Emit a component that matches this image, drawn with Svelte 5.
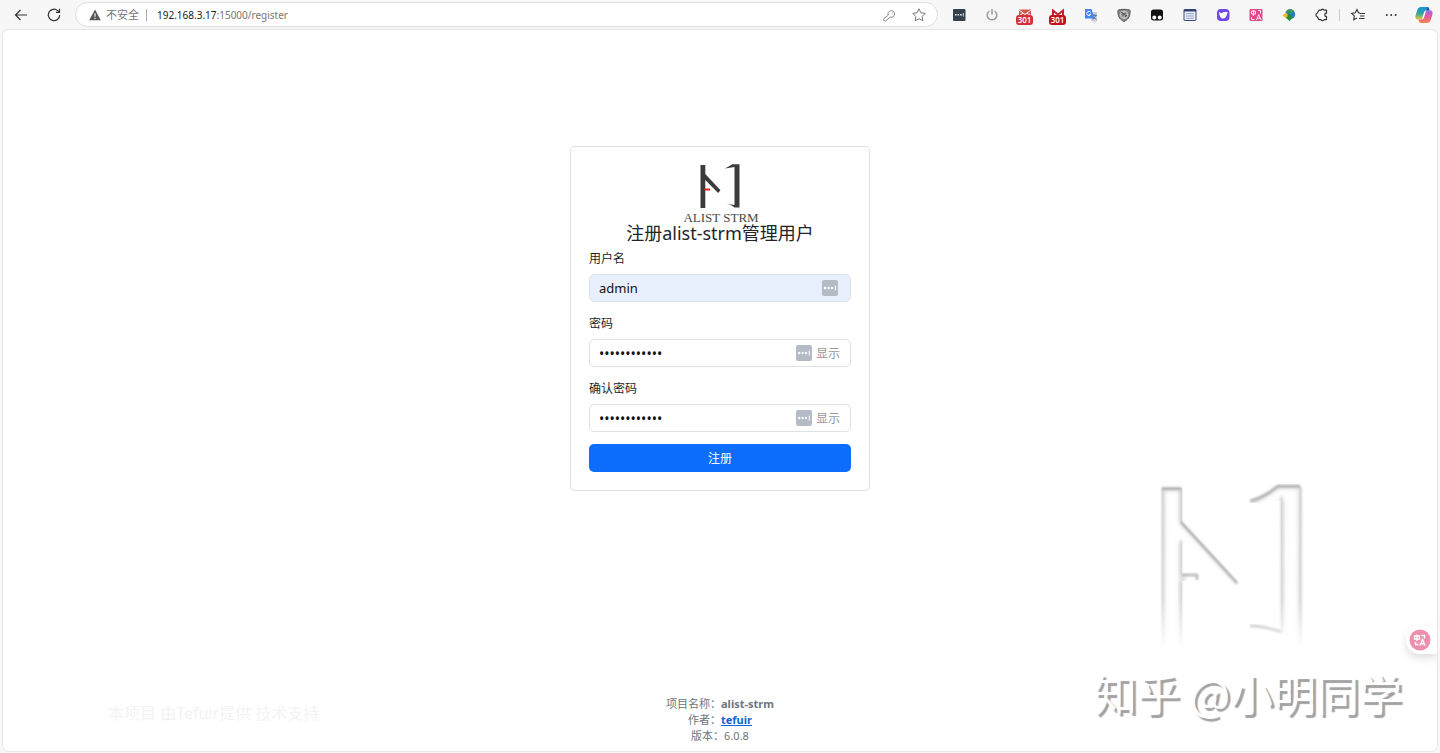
<script>
	let username = $state('admin');
	let password = $state('alist-strm12');
	let confirm = $state('alist-strm12');
	let showPassword = $state(false);
	let showConfirm = $state(false);
	let address = $state('192.168.3.17:15000/register');

	const host = $derived(address.split(':')[0]);
	const rest = $derived(address.slice(host.length));

	const extensions = [
		{ id: 'vault', label: 'Password vault' },
		{ id: 'power', label: 'Power' },
		{ id: 'mail', label: 'Mail', count: 301 },
		{ id: 'gmail', label: 'Gmail', count: 301 },
		{ id: 'translate', label: 'Translate' },
		{ id: 'shield', label: 'Privacy' },
		{ id: 'monkey', label: 'Scripts' },
		{ id: 'notes', label: 'Notes' },
		{ id: 'bird', label: 'Assistant' },
		{ id: 'immersive', label: 'Immersive translate' },
		{ id: 'download', label: 'Download manager' },
		{ id: 'puzzle', label: 'Extensions' },
	];

	function submit(e) {
		e.preventDefault();
	}
</script>

{#snippet dots()}
	<svg class="fill-icon" viewBox="0 0 16 16" aria-hidden="true">
		<rect width="16" height="16" rx="2" fill="#b4bac6" />
		<circle cx="3.2" cy="8" r="1.2" fill="#fff" />
		<circle cx="6.6" cy="8" r="1.2" fill="#fff" />
		<circle cx="10" cy="8" r="1.2" fill="#fff" />
		<path d="M13.3 5.5v5" stroke="#fff" />
	</svg>
{/snippet}

{#snippet translateGlyph()}
	<path d="M2.5 4h5v3h-5zM5 2.5v6.5M9.5 3.5h3v3M3.5 10v2.5h3" fill="none" stroke="#fff" stroke-width="1.3" />
	<path d="M8 13.5l2.5-6 2.5 6M9 11.7h3" fill="none" stroke="#fff" stroke-width="1.4" />
{/snippet}

<div class="browser">
	<header class="toolbar">
		<button class="tool" type="button" aria-label="Back">
			<svg viewBox="0 0 16 16"><path d="M14 8H2.5M7.5 3L2.5 8l5 5" fill="none" stroke="#333" stroke-width="1.2" /></svg>
		</button>
		<button class="tool" type="button" aria-label="Reload">
			<svg viewBox="0 0 16 16">
				<path d="M13.7 8a5.7 5.7 0 1 1-2-4.4L13.2 5" fill="none" stroke="#333" stroke-width="1.2" />
				<path d="M13.5 1.8V5.3H10" fill="none" stroke="#333" stroke-width="1.2" />
			</svg>
		</button>
		<div class="address">
			<svg class="warn" viewBox="0 0 12 12"><path d="M6 .6L11.8 11.2H.2z" fill="#555" /><path d="M6 4.2v3.5M6 8.7v1.3" stroke="#fff" stroke-width="1.1" /></svg>
			<span class="insecure">不安全</span>
			<span class="url"><b>{host}</b>{rest}</span>
			<button class="mini" type="button" aria-label="Saved passwords">
				<svg viewBox="0 0 16 16"><path d="M7.2 8.200a3.300 3.300 0 1 1 2 1.900L4.500 14 2.600 13.600l.2-1.900z" fill="none" stroke="#888" stroke-linejoin="round" /><circle cx="11.300" cy="6" r=".6" fill="#888" /></svg>
			</button>
			<button class="mini" type="button" aria-label="Add to favourites">
				<svg viewBox="0 0 16 16"><path d="M8 1.8l1.9 4 4.4.6-3.2 3 .8 4.4L8 11.7l-3.9 2.1.8-4.4-3.2-3 4.4-.6z" fill="none" stroke="#777" stroke-linejoin="round" /></svg>
			</button>
		</div>

		{#each extensions as ext (ext.id)}
			<button class="tool" type="button" aria-label={ext.label}>
				<svg viewBox="0 0 16 16">
					{#if ext.id === 'vault'}
						<rect x="2" y="2" width="12.5" height="12" rx="1" fill="#33414f" />
						<path d="M4 7.8h1.5M6.6 7.8h1.5M9.2 7.8h1.5" stroke="#fff" stroke-width="1.6" />
						<path d="M12.3 6v3.6" stroke="#fff" stroke-width=".8" />
					{:else if ext.id === 'power'}
						<path d="M5.3 4a4.8 4.8 0 1 0 5.4 0M8 2v5.5" fill="none" stroke="#999" stroke-width="1.5" />
					{:else if ext.id === 'mail'}
						<path d="M2 2.5h12V14H2z" fill="#d9534f" />
						<path d="M2 3l6 4.5L14 3M2 9l4-3M14 9l-4-3" fill="none" stroke="#fff" />
					{:else if ext.id === 'gmail'}
						<path d="M2 3h12v11H2z" fill="#fff" />
						<path d="M3 13V3.5l5 4 5-4V13" fill="none" stroke="#c9202c" stroke-width="2" />
					{:else if ext.id === 'translate'}
						<path d="M7 5h7v9.5H8.5z" fill="#c9cdd4" />
						<path d="M2 2h6.5l3 9.5H2z" fill="#4285f4" />
						<path d="M7.6 5.3a2.1 2.1 0 1 0 .2 2H5.9" fill="none" stroke="#fff" />
						<path d="M9.8 8.3h4M11.8 7.3v1M13 8.5l-3 4M10.8 10l2.5 2.5" fill="none" stroke="#4c6d99" stroke-width=".9" />
					{:else if ext.id === 'shield'}
						<path d="M2 3.2C5 2 11 2 14 3.2c.5 5-1 9-6 11.3C3 12.2 1.500 8.200 2 3.200z" fill="#888" stroke="#555" />
						<circle cx="8" cy="7.8" r="3.8" fill="#aaa" stroke="#ddd" stroke-width=".7" />
						<path d="M5.5 7.5L7 6.500l3.500 2.500M6 9.500l4-4M5 5.500l2 .5M9 10l2-2" stroke="#444" stroke-width=".9" fill="none" />
					{:else if ext.id === 'monkey'}
						<rect x="2" y="2.5" width="12" height="11" rx="2.5" fill="#111" />
						<circle cx="5.3" cy="10.5" r="2" fill="#fff" /><circle cx="10.7" cy="10.5" r="2" fill="#fff" />
					{:else if ext.id === 'notes'}
						<rect x="2" y="2.5" width="12" height="11" rx=".5" fill="#eef" stroke="#394779" />
						<path d="M2 3.5h12" stroke="#34406f" stroke-width="2" />
						<path d="M4 6.7h8M4 9h8M4 11.3h8" stroke="#8fa2c5" />
					{:else if ext.id === 'bird'}
						<rect x="2" y="2" width="12.5" height="12" rx="4" fill="#7047eb" />
						<path d="M4 5l3 1.5c.4-1 1-1.500 2-1.500h4c-1 1-.8 1.800-1.200 3-.8 2.500-2 3.500-4 3.500-2.200 0-3.400-2.500-3.800-6.500z" fill="#fff" />
					{:else if ext.id === 'immersive'}
						<rect x="1.5" y="2" width="13" height="12" rx="1" fill="#e5478c" />
						<path d="M3.5 4.2h4v2.8h-4zM5.5 3v6M10 3.5h2.5v3M3.5 10v2.5h3M8.500 13l2.200-5.500L13 13M9.300 11.200h3" fill="none" stroke="#fff" stroke-width=".9" />
					{:else if ext.id === 'download'}
						<circle cx="9.2" cy="7.3" r="5" fill="#277dbd" />
						<path d="M5.500 3.800c2-2.500 5.500-1.800 7 0L11 6.500 8 5.500z" fill="#3a9a49" />
						<path d="M1.500 8.500l3.500-3 2 2.200L9 8v5.500L6 12z" fill="#f0bd31" />
						<path d="M6.500 7.500h3.500V10h2L8.500 14.300 4.800 10h1.700z" fill="#268b36" />
					{:else}
						<path d="M5 3.2h2a1.7 1.7 0 0 1 3.2 0h2.3v3a1.700 1.700 0 1 0 0 3.400v3h-2.300a1.700 1.700 0 0 1-3.200 0H5L3.300 9.800a2 2 0 0 1 0-3.800z" fill="none" stroke="#333" stroke-width="1.2" stroke-linejoin="round" />
					{/if}
				</svg>
				{#if ext.count}
					<span class="badge {ext.id}">{ext.count}</span>
				{/if}
			</button>
		{/each}

		<span class="divider"></span>
		<button class="tool" type="button" aria-label="Favourites">
			<svg viewBox="0 0 16 16"><path d="M10 6L8.5 5.7 7 2.5 5.3 5.8l-3.6.5 2.6 2.6-.6 3.8L7 11M9.5 6.500H15M10 9h4.500M9 11.500h5.500" fill="none" stroke="#333" stroke-width="1.1" /></svg>
		</button>
		<button class="tool" type="button" aria-label="More">
			<svg viewBox="0 0 16 16"><circle cx="3.800" cy="8" r="1" fill="#333" /><circle cx="8.200" cy="8" r="1" fill="#333" /><circle cx="12.600" cy="8" r="1" fill="#333" /></svg>
		</button>
		<button class="tool copilot" type="button" aria-label="Copilot">
			<svg viewBox="0 0 18 18">
				<defs>
					<linearGradient id="cool" x1="0" y1="0" x2="0" y2="1"><stop offset="0" stop-color="#1b91d8" /><stop offset=".5" stop-color="#2aa5a0" /><stop offset="1" stop-color="#e9c635" /></linearGradient>
					<linearGradient id="warm" x1="0" y1="0" x2="0" y2="1"><stop offset="0" stop-color="#a663e8" /><stop offset=".5" stop-color="#e75a9d" /><stop offset="1" stop-color="#f58a4d" /></linearGradient>
				</defs>
				<path d="M6 1h6c2 0 2 2 2.5 3.5h-3C9.5 4.5 9 6 8.5 8l-1 3.5c-.5 1.5-1 2-2.5 2H3C.5 13.5 0 11.5.7 9L2.5 3.5C3 2 4 1 6 1z" fill="url(#cool)" />
				<path d="M12 17H6c-2 0-2-2-2.5-3.5h3c2 0 2.5-1.5 3-3.5l1-3.5c.5-1.5 1-2 2.5-2h2c2.5 0 3 2 2.3 4.5L15.5 14.5C15 16 14 17 12 17z" fill="url(#warm)" />
				<path d="M12 1c2 0 2 2 2.5 3.5h-3z" fill="#2456bd" />
			</svg>
		</button>
	</header>

	<div class="page">
		<main class="card">
			<svg class="logo" viewBox="0 0 78 58" role="img" aria-label="ALIST STRM">
				<path d="M19.5 0h4.800v9l15.200 16.200-2.400 2.800L24.300 15V43h-4.800z" fill="#3c3a3b" />
				<path d="M44 3.500L51.500-.8H58.500V42.500H53.500C51 40.200 47.500 39 44 38.500l9.500 1.500V2z" fill="#3c3a3b" />
				<path d="M23.500 24.500h5.500" stroke="#e3241d" stroke-width="2" />
				<text x="40" y="57" text-anchor="middle">ALIST STRM</text>
			</svg>
			<h1>注册alist-strm管理用户</h1>
			<form onsubmit={submit}>
				<label for="username">用户名</label>
				<div class="field filled">
					<input id="username" type="text" bind:value={username} />
					{@render dots()}
				</div>

				<label for="password">密码</label>
				<div class="field">
					<input id="password" type={showPassword ? 'text' : 'password'} bind:value={password} />
					{@render dots()}
					<button class="reveal" type="button" onclick={() => (showPassword = !showPassword)}>{showPassword ? '隐藏' : '显示'}</button>
				</div>

				<label for="confirm">确认密码</label>
				<div class="field">
					<input id="confirm" type={showConfirm ? 'text' : 'password'} bind:value={confirm} />
					{@render dots()}
					<button class="reveal" type="button" onclick={() => (showConfirm = !showConfirm)}>{showConfirm ? '隐藏' : '显示'}</button>
				</div>

				<button class="submit" type="submit">注册</button>
			</form>
		</main>

		<footer>
			<p>项目名称：<strong>alist-strm</strong></p>
			<p>作者：<a href="#tefuir">tefuir</a></p>
			<p>版本：6.0.8</p>
		</footer>

		<p class="support">本项目 由Tefuir提供 技术支持</p>

		<svg class="emboss" viewBox="0 0 144 164" aria-hidden="true">
			<defs>
				<linearGradient id="fade" x1="0" y1="0" x2="0" y2="1">
					<stop offset="0" stop-color="#fff" /><stop offset=".7" stop-color="#ddd" /><stop offset="1" stop-color="#000" />
				</linearGradient>
				<mask id="fadeMask"><rect width="144" height="164" fill="url(#fade)" /></mask>
				<filter id="soft" x="-20%" y="-20%" width="140%" height="140%"><feGaussianBlur stdDeviation="2" /></filter>
				<filter id="edge" x="-20%" y="-20%" width="140%" height="140%"><feGaussianBlur stdDeviation=".8" /></filter>
				<clipPath id="shape">
					<path d="M2 4h20v34l57 61-5 7-52-52v36h16v7H22v61H2zM90 18c12-4 20-10 28-16h23v160h-20v-13c-10-4-21-6-31-6 12 0 22 2 31 4V16c-10 3-20 5-31 2z" />
				</clipPath>
			</defs>
			<g mask="url(#fadeMask)" fill="none">
				<g clip-path="url(#shape)" stroke="#d6d2d2" stroke-width="5" filter="url(#soft)">
					<path d="M2 164V4h20v34l57 61M22 58v106M90 18c12-4 20-10 28-16h23v162M121 16v133" />
				</g>
				<g stroke="#cfcdcd" stroke-width="1.8" filter="url(#edge)">
					<path d="M2.5 164V4M21 4v34M21 56v34M21 98v66M141 3v161M121.500 12v136" />
				</g>
				<g stroke="#aaa" stroke-width="2.4" filter="url(#edge)">
					<path d="M2 4.5h19M21 38l56 61M22 91h15v5M90 17c12-3 20-9 28-15h22" />
				</g>
				<path d="M90 142c12 0 22 3 31 6" stroke="#777" stroke-width="2.4" filter="url(#edge)" />
			</g>
		</svg>
		<p class="watermark">知乎 @小明同学</p>

		<button class="float" type="button" aria-label="Translate page">
			<svg viewBox="0 0 22 22">
				<circle cx="11" cy="11" r="10.5" fill="#ee8fae" />
				<g transform="translate(3 3)">{@render translateGlyph()}</g>
			</svg>
		</button>
	</div>
</div>

<style>
	:global(body) {
		margin: 0;
		background: #f7f7f7;
		font-family: 'Noto Sans', 'Noto Sans CJK SC', sans-serif;
		color: #212529;
	}
	button,
	input {
		font-family: inherit;
		margin: 0;
	}
	button {
		border: 0;
		padding: 0;
		background: none;
		cursor: pointer;
	}
	p {
		margin: 0;
	}
	svg {
		display: block;
	}
	.browser {
		display: flex;
		flex-direction: column;
		min-height: 100vh;
	}

	/* browser bar */
	.toolbar {
		display: flex;
		align-items: center;
		height: 29px;
		padding-left: 4px;
	}
	.tool {
		position: relative;
		display: flex;
		justify-content: center;
		flex: 0 0 33px;
	}
	.tool svg {
		width: 16px;
		height: 16px;
	}
	.tool.copilot svg {
		width: 18px;
		height: 18px;
	}
	.badge {
		position: absolute;
		left: 8px;
		top: 8px;
		width: 17px;
		border-radius: 3px;
		background: #d32f36;
		color: #fff;
		font-size: 8px;
		font-weight: 600;
		line-height: 10px;
		text-align: center;
	}
	.badge.gmail {
		background: #c4101f;
	}
	.address {
		display: flex;
		align-items: center;
		flex: 1;
		box-sizing: border-box;
		height: 25px;
		margin: 0 4px 0 5px;
		padding: 0 10px 0 13px;
		border: 1px solid #dedede;
		border-radius: 13px;
		background: #fff;
		font-size: 11px;
		color: #767676;
	}
	.warn {
		width: 12px;
		height: 12px;
		margin-right: 5px;
	}
	.insecure {
		padding-right: 7px;
		border-right: 1px solid #aaa;
		line-height: 12px;
	}
	.url {
		flex: 1;
		margin-left: 10px;
		font-size: 10px;
	}
	.url b {
		font-weight: 400;
		color: #222;
	}
	.mini {
		margin-left: 14px;
	}
	.mini svg {
		width: 16px;
		height: 16px;
	}
	.divider {
		width: 1px;
		height: 12px;
		margin: 0 1px;
		background: #ccc;
	}

	/* page */
	.page {
		position: relative;
		display: flex;
		flex-direction: column;
		align-items: center;
		flex: 1;
		margin: 0 2px 1px;
		padding-top: 116px;
		border: 1px solid #e6e6e6;
		border-radius: 7px;
		background: #fff;
		overflow: hidden;
	}
	.card {
		box-sizing: border-box;
		width: 300px;
		padding: 18px;
		border: 1px solid #dcdedf;
		border-radius: 5px;
	}
	.logo {
		width: 78px;
		height: 58px;
		margin: 0 auto;
		overflow: visible;
	}
	.logo text {
		font-family: 'Liberation Serif', serif;
		font-size: 13px;
		fill: #4a4849;
	}
	h1 {
		margin: 0 0 6px;
		font-size: 18px;
		font-weight: 400;
		line-height: 20px;
		text-align: center;
		white-space: nowrap;
	}
	label {
		display: block;
		margin-bottom: 5px;
		font-size: 12px;
		line-height: 20px;
	}
	.field {
		display: flex;
		align-items: center;
		box-sizing: border-box;
		height: 28px;
		margin-bottom: 12px;
		padding: 0 10px 0 9px;
		border: 1px solid #dee2e6;
		border-radius: 5px;
		background: #fff;
	}
	.field.filled {
		padding-right: 12px;
		background: #e8f0fe;
	}
	.field input {
		flex: 1;
		min-width: 0;
		padding: 0;
		border: 0;
		outline: 0;
		background: none;
		font-size: 13px;
		color: #111;
	}
	.field input[type='password'] {
		font-size: 14px;
	}
	.fill-icon {
		width: 16px;
		height: 16px;
	}
	.reveal {
		margin-left: 4px;
		font-size: 12px;
		color: #999;
	}
	.submit {
		display: block;
		width: 100%;
		height: 28px;
		border-radius: 5px;
		background: #0d6efd;
		color: #fff;
		font-size: 12px;
	}
	footer {
		margin-top: auto;
		padding-bottom: 7px;
		font-size: 11px;
		line-height: 16px;
		text-align: center;
		color: #6c757d;
	}
	footer strong {
		font-weight: 700;
	}
	footer a {
		font-weight: 700;
		color: #0d64d8;
	}

	/* overlays */
	.support {
		position: absolute;
		left: 105px;
		bottom: 26px;
		font-size: 16px;
		line-height: 24px;
		color: #f3f3f3;
	}
	.emboss {
		position: absolute;
		right: 133px;
		bottom: 103px;
		width: 144px;
		height: 164px;
	}
	.watermark {
		position: absolute;
		right: 35px;
		bottom: 29px;
		font-family: 'Noto Sans CJK SC', sans-serif;
		font-size: 43px;
		line-height: 60px;
		color: #fff;
		text-shadow: 3px 3px 1px #a2a2a2;
	}
	.float {
		position: absolute;
		right: 0;
		bottom: 97px;
		padding: 3px 6px 3px 3px;
		border-radius: 14px 0 0 14px;
		background: #fff;
		box-shadow: 0 4px 8px #0002;
	}
	.float svg {
		width: 22px;
		height: 22px;
	}
</style>
